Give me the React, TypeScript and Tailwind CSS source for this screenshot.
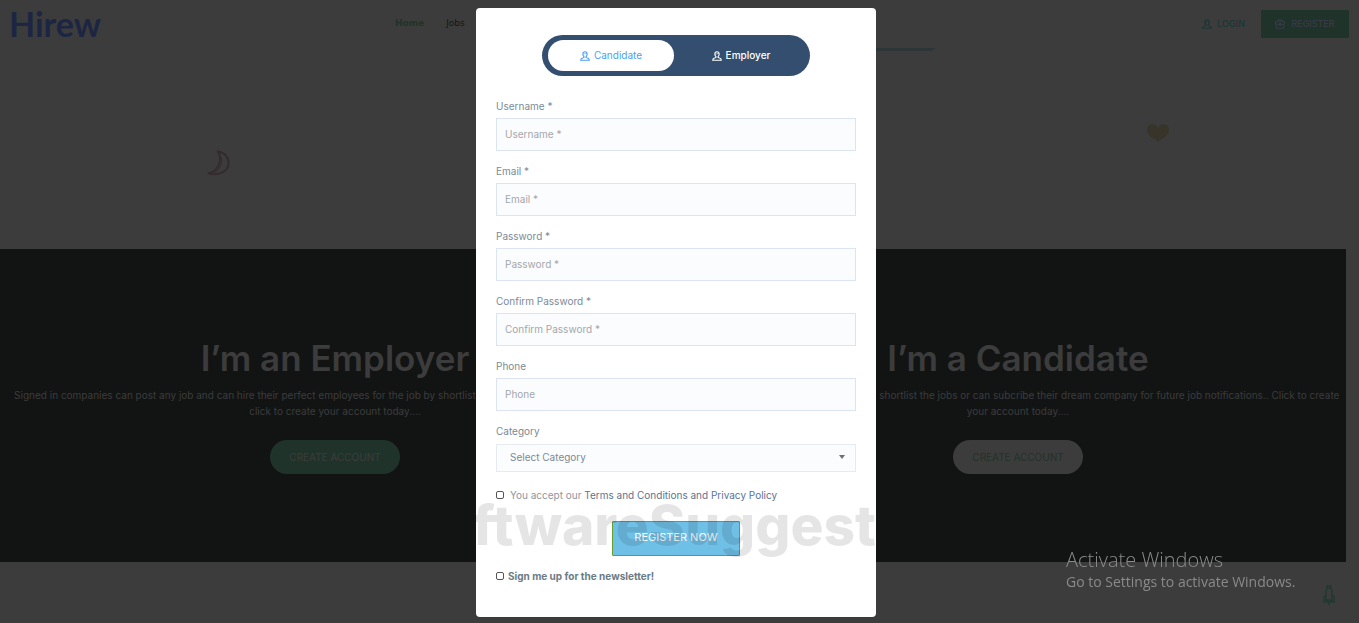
import React from 'react';

type FieldProps = { id: string; label: string; type?: string };

const UserIcon: React.FC = () => (
  <svg className="size-2.5 shrink-0" viewBox="0 0 20 20" fill="none" stroke="currentColor" strokeWidth="2.2" aria-hidden="true">
    <path d="M10 1.5c-2.800 0-4.300 1.900-4.300 4.600 0 2.300.9 4.200 2.300 5.300v1.600L2.500 15.200 1.500 18.500h17l-1-3.300L12 13v-1.600c1.400-1.100 2.300-3 2.300-5.300 0-2.700-1.500-4.600-4.300-4.600z" />
    <path d="M6 6c2.500.5 5-.3 6-2 .3 1 1 1.600 2 2" strokeWidth="1.200" />
  </svg>
);

const BriefcaseIcon: React.FC = () => (
  <svg className="size-2.5 shrink-0" viewBox="0 0 20 20" fill="none" stroke="currentColor" strokeWidth="1.800" aria-hidden="true">
    <path d="M6.500 4.500V1.500h7v3M1 4.500h18v6H1zM2.500 10.500v8h15v-8M8 9h4v4H8z" />
  </svg>
);

const Field: React.FC<FieldProps> = ({ id, label, type = 'text' }) => (
  <div className="mb-3 flex flex-col gap-1">
    <label htmlFor={id} className="text-[10px] leading-4 text-[#7b8a96]">{label}</label>
    <input
      id={id}
      type={type}
      placeholder={label}
      className="h-[33px] w-full border border-[#dbe4f0] bg-[#fbfcfe] px-2 pb-0.5 text-[10px] text-[#6b7c8a] placeholder:text-[#a3a7aa] outline-none"
    />
  </div>
);

const Header: React.FC = () => (
  <header className="flex h-12 items-center justify-between pl-[9px] pr-2.5">
    <a href="#" className="w-[88px] font-['Lato'] text-[34px] font-bold leading-none text-[#1c2643]">Hirew</a>
    <nav className="mr-auto ml-[298px] flex gap-[22px] font-['DejaVu_Sans'] text-[9px]">
      <a href="#" className="font-bold text-[#20332a]">Home</a>
      <a href="#" className="text-[#151515]">Jobs</a>
    </nav>
    <div className="flex items-center gap-4 text-[9px]">
      <a href="#" className="flex items-center gap-[5px] font-medium text-[#1c3436]"><UserIcon />LOGIN</a>
      <a href="#" className="flex h-7 w-[88px] items-center justify-center gap-1.5 bg-[#20332a] text-[#3c3c4c]"><BriefcaseIcon />REGISTER</a>
    </div>
  </header>
);

const RegisterModal: React.FC = () => (
  <div className="fixed inset-0 flex items-start justify-center pt-2 pr-[7px]">
    <div role="dialog" aria-label="Register" className="relative w-[400px] overflow-hidden rounded bg-white px-5 pt-[27px] pb-[33px]">
      <div className="mx-auto mb-[22px] flex h-[41px] w-[268px] gap-1 rounded-full bg-[#344e6f] px-1.5 py-[5px] text-[10px]">
        <button type="button" className="flex flex-1 items-center justify-center gap-1 rounded-full bg-white text-[#4a9ff5]">
          <UserIcon />Candidate
        </button>
        <button type="button" className="flex flex-1 items-center justify-center gap-1 rounded-full font-medium text-white">
          <UserIcon />Employer
        </button>
      </div>

      <form className="flex flex-col">
        <Field id="username" label="Username *" />
        <Field id="email" label="Email *" type="email" />
        <Field id="password" label="Password *" type="password" />
        <Field id="confirm" label="Confirm Password *" type="password" />
        <Field id="phone" label="Phone" type="tel" />

        <label htmlFor="category" className="mb-1 text-[10px] leading-4 text-[#7b8a96]">Category</label>
        <div className="relative">
          <select id="category" className="h-7 w-full appearance-none border border-[#e6ebf1] bg-[#fbfcfe] px-[13px] text-[10px] text-[#7b8a96]">
            <option>Select Category</option>
          </select>
          <svg className="pointer-events-none absolute top-3 right-2.5 h-1 w-2" viewBox="0 0 8 4" fill="#6f6f6f"><path d="M1 0h6L4 4z" /></svg>
        </div>

        <div className="mt-[15px] flex items-center gap-1.5 text-[10px] leading-4 text-[#8e979f]">
          <input id="terms" type="checkbox" className="size-2 appearance-none rounded-[2px] border border-[#555] bg-white" />
          <label htmlFor="terms">You accept our <a href="#" className="text-[#5c7394]">Terms and Conditions and Privacy Policy</a></label>
        </div>

        <button type="submit" className="mx-auto mt-[18px] h-[35px] w-32 rounded-[1px] border border-[#64a12d] bg-[#6fc0e7] pb-0.5 text-[11px] text-white">
          REGISTER NOW
        </button>

        <div className="mt-3 flex items-center gap-1 text-[10px] font-bold leading-4 text-[#6c7b86]">
          <input id="newsletter" type="checkbox" className="size-2 appearance-none rounded-[2px] border border-[#555] bg-white" />
          <label htmlFor="newsletter">Sign me up for the newsletter!</label>
        </div>
      </form>

      <div className="pointer-events-none absolute right-0 bottom-16 text-[55px] font-extrabold leading-none whitespace-nowrap text-black/10">ftwareSuggest</div>
    </div>
  </div>
);

const App: React.FC = () => (
  <div className="relative min-h-screen overflow-hidden bg-[#3c3c3c] font-['Inter',sans-serif]">
    <section className="relative h-[249px]">
      <Header />
      <svg className="absolute top-[150px] left-[206px] h-[26px] w-6" viewBox="0 0 24 26" fill="none" stroke="#352b2f" strokeWidth="2">
        <path d="M12 1.500c7 1 11 6 10.500 12.500C22 21 14 26 2 23.500 12 21.500 17 11 12 1.500z" />
        <path d="M14 5c4 6 1 14-5 17" strokeWidth="1" />
      </svg>
      <svg className="absolute top-[124px] right-[190px] h-[18px] w-[22px]" viewBox="0 0 22 18" fill="#37352a">
        <path d="M11 18C9 15 0 13 0 6 0 2 3 0 5.500 0 8 0 10 2 11 4c1-2 3-4 5.500-4C19 0 22 2 22 6c0 7-9 9-11 12z" />
      </svg>
      <svg className="absolute top-12 left-[860px] h-[3px] w-[76px]" viewBox="0 0 76 3" fill="#2c3638"><path d="M0 0h76l-5 3H0z" /></svg>
    </section>

    <section className="mr-[13px] flex h-[313px] gap-5 bg-[#121414] pt-[89px] text-center text-[10px] leading-4 text-[#3c3c3c]">
      <div className="min-w-0 flex-[670]">
        <h2 className="mb-[9px] text-[35px] font-semibold leading-10">I’m an Employer</h2>
        <p className="whitespace-nowrap">Signed in companies can post any job and can hire their perfect employees for the job by shortlisting the best resumes and profiles, just</p>
        <p>click to create your account today....</p>
        <a href="#" className="mt-[21px] inline-flex h-[34px] w-[130px] items-center justify-center rounded-full bg-[#20332a]">CREATE ACCOUNT</a>
      </div>
      <div className="min-w-0 flex-[656]">
        <h2 className="mb-[9px] text-[35px] font-semibold leading-10">I’m a Candidate</h2>
        <p className="whitespace-nowrap">Signed in candidates can apply to job, shortlist the jobs or can subcribe their dream company for future job notifications.. Click to create</p>
        <p>your account today....</p>
        <a href="#" className="mt-[21px] inline-flex h-[34px] w-[130px] items-center justify-center rounded-full bg-[#3c3c3c] text-[#20332a]">CREATE ACCOUNT</a>
      </div>
    </section>

    <RegisterModal />

    {/* scroll to top rocket */}
    <svg className="absolute right-6 bottom-[18px] h-5 w-3" viewBox="0 0 12 20" fill="none" stroke="#20382f" strokeWidth="1.500">
      <path d="M4 1h4v2H4zM4 3L3 6v9h6V6L8 3M3 10l-2 2v5h2.500M9 10l2 2v5H8.500M3 15l1.500 2h3L9 15M6 17v3" />
    </svg>
    <div className="fixed right-[57px] bottom-[31px] w-[236px] font-['Open_Sans'] whitespace-nowrap text-[#8a8a8a]">
      <div className="text-[20px] font-light leading-6">Activate Windows</div>
      <div className="text-[14px] leading-5">Go to Settings to activate Windows.</div>
    </div>
  </div>
);

export default App;
